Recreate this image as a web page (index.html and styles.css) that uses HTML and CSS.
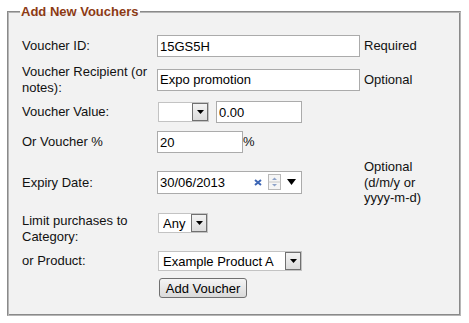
FILE: index.html
```html
<!DOCTYPE html>
<html lang="en">
<head>
  <meta charset="UTF-8" />
  <title>Add New Vouchers</title>
  <link rel="stylesheet" href="styles.css">
</head>
<body>
  <fieldset class="voucher-box">
    <legend>Add New Vouchers</legend>
    <table class="voucher-form">
      <colgroup>
        <col class="c-label"><col class="c-field"><col class="c-note">
      </colgroup>
      <tr>
        <td class="lbl">Voucher ID:</td>
        <td><input type="text" class="txt txt-wide" value="15GS5H"></td>
        <td class="note">Required</td>
      </tr>
      <tr>
        <td class="lbl">Voucher Recipient (or notes):</td>
        <td><input type="text" class="txt txt-wide" value="Expo promotion"></td>
        <td class="note">Optional</td>
      </tr>
      <tr class="row-value">
        <td class="lbl">Voucher Value:</td>
        <td>
          <div class="value-group">
            <span class="sel sel-currency">
              <select><option></option></select>
              <span class="sel-btn"><svg width="7" height="4" viewBox="0 0 7 4"><polygon points="0,0 7,0 3.5,4" fill="#000"/></svg></span>
            </span>
            <input type="text" class="txt txt-amount" value="0.00">
          </div>
        </td>
        <td></td>
      </tr>
      <tr>
        <td class="lbl">Or Voucher %</td>
        <td><input type="text" class="txt txt-pct" value="20"><span class="unit">%</span></td>
        <td></td>
      </tr>
      <tr class="row-date">
        <td class="lbl">Expiry Date:</td>
        <td>
          <div class="date-input">
            <span class="date-val">30/06/2013</span>
            <span class="date-clear"><svg width="8" height="7" viewBox="0 0 8 7"><path d="M1 1 L7 6 M7 1 L1 6" stroke="#3d66b5" stroke-width="2"/></svg></span>
            <span class="date-spin"><svg width="13" height="16" viewBox="0 0 13 16"><rect x="0.5" y="0.5" width="12" height="15" fill="#f5f5f5" stroke="#b9b9b9"/><line x1="0.5" y1="8" x2="12.5" y2="8" stroke="#c8c8c8"/><polygon points="4,6 9,6 6.5,3.5" fill="#8ea3c9"/><polygon points="4,10 9,10 6.5,12.5" fill="#8ea3c9"/></svg></span>
            <span class="date-drop"><svg width="9" height="6" viewBox="0 0 9 6"><polygon points="0,0 9,0 4.5,6" fill="#000"/></svg></span>
          </div>
        </td>
        <td class="note">Optional (d/m/y or yyyy-m-d)</td>
      </tr>
      <tr class="row-top">
        <td class="lbl">Limit purchases to Category:</td>
        <td>
          <span class="sel sel-any">
            <select><option>Any</option></select>
            <span class="sel-btn"><svg width="7" height="4" viewBox="0 0 7 4"><polygon points="0,0 7,0 3.5,4" fill="#000"/></svg></span>
          </span>
        </td>
        <td></td>
      </tr>
      <tr>
        <td class="lbl">or Product:</td>
        <td>
          <span class="sel sel-product">
            <select><option>Example Product A</option></select>
            <span class="sel-btn"><svg width="7" height="4" viewBox="0 0 7 4"><polygon points="0,0 7,0 3.5,4" fill="#000"/></svg></span>
          </span>
        </td>
        <td></td>
      </tr>
      <tr>
        <td></td>
        <td><button class="btn-add">Add Voucher</button></td>
        <td></td>
      </tr>
    </table>
  </fieldset>
</body>
</html>
```

FILE: styles.css
```css
body {
  margin: 0;
  background: #fff;
  font-family: "Liberation Sans", Arial, sans-serif;
  font-size: 13px;
  color: #111;
}

.voucher-box {
  margin: 4px 8px 7px 7px;
  padding: 12px 12px 14px 14px;
  min-width: 0;
  background: #f2f2f2;
  border: 1px solid;
  border-color: #8a8a8a #b6b6b6 #b6b6b6 #8a8a8a;
  box-shadow: inset 1px 1px 0 #b6b6b6, inset -1px -1px 0 #8a8a8a;
}
.voucher-box legend {
  margin-left: -2px;
  padding: 0 1px;
  line-height: 15px;
  font-weight: bold;
  color: #8c3a14;
  background: linear-gradient(#fff 8px, #f2f2f2 8px);
}

.voucher-form {
  border-spacing: 0;
  table-layout: fixed;
  width: 422px;
}
.c-label { width: 135px; }
.c-field { width: 207px; }
.c-note { width: 80px; }

.voucher-form td {
  padding: 4px 0 3px;
  vertical-align: middle;
  line-height: 15.5px;
}
.voucher-form td.lbl {
  padding-right: 5px;
}
.row-value td {
  padding: 3px 0 4px;
}
.row-date td {
  padding: 3px 0 3.5px;
}
.row-top td {
  vertical-align: top;
}

.txt {
  box-sizing: border-box;
  height: 22px;
  margin: 0;
  padding: 0 2px;
  border: 1px solid #ababab;
  background: #fff;
  font: 13px "Liberation Sans", Arial, sans-serif;
  color: #000;
  vertical-align: middle;
}
.txt-wide { width: 203px; }
.txt-amount { width: 86px; }
.txt-pct { width: 86px; }
.unit {
  vertical-align: middle;
}

.value-group {
  display: flex;
  align-items: center;
  gap: 7px;
}

.sel {
  position: relative;
  display: inline-block;
  margin-left: 1px;
  vertical-align: middle;
}
.sel select {
  -webkit-appearance: none;
  appearance: none;
  display: block;
  box-sizing: border-box;
  height: 20px;
  margin: 0;
  padding: 0 18px 0 4px;
  border: 1px solid #c3c3c3;
  border-radius: 0;
  background: #fff;
  font: 13px "Liberation Sans", Arial, sans-serif;
  color: #000;
}
.sel-currency select { width: 51px; }
.sel-any select { width: 50px; }
.sel-product select { width: 144px; }
.sel-btn {
  position: absolute;
  top: 1px;
  right: 1px;
  bottom: 1px;
  width: 16px;
  box-sizing: border-box;
  border: 1px solid #707070;
  background: linear-gradient(#f3f3f3, #dcdcdc);
  display: flex;
  align-items: center;
  justify-content: center;
  pointer-events: none;
}

.date-input {
  display: flex;
  align-items: center;
  box-sizing: border-box;
  width: 145px;
  height: 23px;
  padding: 0 5px 0 2px;
  border: 1px solid #ababab;
  background: #fff;
  color: #000;
}
.date-val { flex: 1; }
.date-clear { display: flex; }
.date-spin { display: flex; margin-left: 6px; }
.date-drop { display: flex; margin-left: 6px; }

.btn-add {
  box-sizing: border-box;
  width: 88px;
  height: 20px;
  margin: 0 0 0 2px;
  padding: 0;
  border: 1px solid #707070;
  border-radius: 3px;
  background: linear-gradient(#f5f5f5, #dadada);
  font: 13px "Liberation Sans", Arial, sans-serif;
  color: #000;
}
```
